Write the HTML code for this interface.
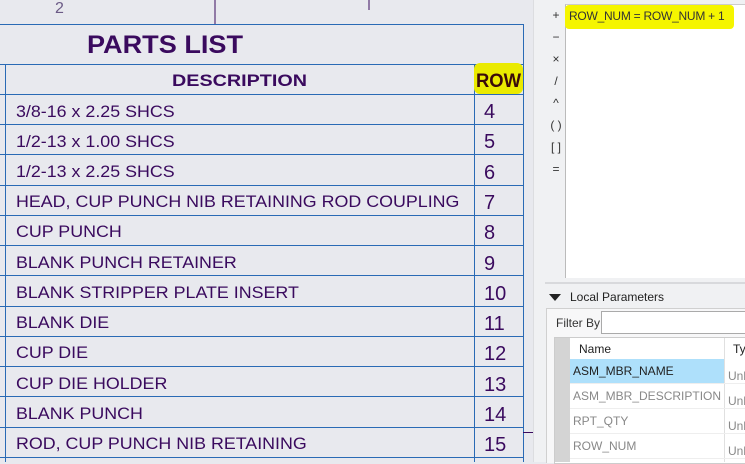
<!DOCTYPE html>
<html><head><style>
body{margin:0;width:745px;height:462px;overflow:hidden;background:#e8e9ee;font-family:"Liberation Sans",sans-serif;position:relative}
.a{position:absolute;white-space:nowrap}
.hl{stroke:#2a6ab5;stroke-width:1}
.t{font-family:"Liberation Sans",sans-serif;fill:#3a0a5e}
</style></head><body>
<svg class="a" style="left:0;top:0" width="533" height="462">
<rect width="533" height="462" fill="#e8e9ee"/>
<text x="55" y="13" font-size="16" class="t" style="fill:#6b5a86">2</text>
<line x1="215" y1="0" x2="215" y2="24" stroke="#3a0a5e"/>
<line x1="369" y1="0" x2="369" y2="10" stroke="#3a0a5e"/>
<line x1="0" y1="24.5" x2="523" y2="24.5" class="hl"/>
<line x1="523.5" y1="24" x2="523.5" y2="462" class="hl"/>
<line x1="5.5" y1="64" x2="5.5" y2="462" class="hl"/>
<line x1="474.5" y1="64" x2="474.5" y2="462" class="hl"/>
<line x1="0" y1="64.5" x2="523" y2="64.5" class="hl"/>
<line x1="0" y1="94.5" x2="523" y2="94.5" class="hl"/>
<g class="hl">
<line x1="0" y1="124.5" x2="523" y2="124.5"/><line x1="0" y1="154.5" x2="523" y2="154.5"/>
<line x1="0" y1="185.5" x2="523" y2="185.5"/><line x1="0" y1="215.5" x2="523" y2="215.5"/>
<line x1="0" y1="245.5" x2="523" y2="245.5"/><line x1="0" y1="275.5" x2="523" y2="275.5"/>
<line x1="0" y1="306.5" x2="523" y2="306.5"/><line x1="0" y1="336.5" x2="523" y2="336.5"/>
<line x1="0" y1="366.5" x2="523" y2="366.5"/><line x1="0" y1="396.5" x2="523" y2="396.5"/>
<line x1="0" y1="427.5" x2="523" y2="427.5"/><line x1="0" y1="457.5" x2="523" y2="457.5"/>
</g>
<line x1="523" y1="432.5" x2="533" y2="432.5" stroke="#3a0a5e"/>
<text x="87" y="53" font-size="25" font-weight="bold" class="t" textLength="156" lengthAdjust="spacingAndGlyphs">PARTS LIST</text>
<text x="172" y="86" font-size="17" font-weight="bold" class="t" textLength="135" lengthAdjust="spacingAndGlyphs">DESCRIPTION</text>
<rect x="474" y="63" width="49" height="31" rx="6" fill="#eaea00"/>
<text x="476" y="87" font-size="19" font-weight="bold" class="t" style="fill:#3a0a0a" textLength="45" lengthAdjust="spacingAndGlyphs">ROW</text>
<g transform="translate(16,0) scale(1.05,1) translate(-16,0)">
<g font-size="17" class="t">
<text x="16" y="117">3/8-16 x 2.25 SHCS</text>
<text x="16" y="147">1/2-13 x 1.00 SHCS</text>
<text x="16" y="177">1/2-13 x 2.25 SHCS</text>
<text x="16" y="207">HEAD, CUP PUNCH NIB RETAINING ROD COUPLING</text>
<text x="16" y="237">CUP PUNCH</text>
<text x="16" y="268">BLANK PUNCH RETAINER</text>
<text x="16" y="298">BLANK STRIPPER PLATE INSERT</text>
<text x="16" y="328">BLANK DIE</text>
<text x="16" y="358">CUP DIE</text>
<text x="16" y="389">CUP DIE HOLDER</text>
<text x="16" y="419">BLANK PUNCH</text>
<text x="16" y="449">ROD, CUP PUNCH NIB RETAINING</text>
</g></g>
<g font-size="20" class="t">
<text x="484" y="118">4</text><text x="484" y="148">5</text><text x="484" y="179">6</text>
<text x="484" y="209">7</text><text x="484" y="239">8</text><text x="484" y="270">9</text>
<text x="484" y="300">10</text><text x="484" y="330">11</text><text x="484" y="360">12</text>
<text x="484" y="391">13</text><text x="484" y="421">14</text><text x="484" y="451">15</text>
</g>
</svg>
<div class="a" style="left:533px;top:0;width:212px;height:462px;background:#f0f1f3"></div>
<div class="a" style="left:533px;top:0;width:1px;height:462px;background:#dcdde0"></div>
<div class="a" style="left:546px;top:0;width:199px;height:282px;background:#f0f1f3;font:12px 'Liberation Sans',sans-serif;color:#333">
<div class="a" style="left:3px;top:4px;line-height:22px;width:14px;text-align:center;white-space:normal">+<br>−<br>×<br>/<br>^<br>( )<br>[ ]<br>=</div>
</div>
<div class="a" style="left:565px;top:4px;width:180px;height:273px;background:#fff;border-left:1px solid #bbb;border-top:1px solid #ccc"></div>
<div class="a" style="left:565px;top:5px;width:169px;height:24px;background:#f5f500;border-radius:4px"></div>
<div class="a" style="left:569px;top:9px;font:12px 'Liberation Sans',sans-serif;color:#333;letter-spacing:-0.25px">ROW_NUM = ROW_NUM + 1</div>
<div class="a" style="left:545px;top:282px;width:200px;height:2px;background:#d8d9dc"></div>
<div class="a" style="left:549px;top:294px;width:0;height:0;border-left:6px solid transparent;border-right:6px solid transparent;border-top:7px solid #222"></div>
<div class="a" style="left:570px;top:290px;font:12px 'Liberation Sans',sans-serif;color:#222">Local Parameters</div>
<div class="a" style="left:546px;top:308px;width:199px;height:154px;background:#f7f7f8;border-left:1px solid #d0d0d0;border-top:1px solid #d0d0d0"></div>
<div class="a" style="left:556px;top:316px;font:12px 'Liberation Sans',sans-serif;color:#333">Filter By</div>
<div class="a" style="left:601px;top:311px;width:144px;height:21px;background:#fff;border:1px solid #aaa"></div>
<div class="a" style="left:554px;top:337px;width:191px;height:125px;background:#fff;border:1px solid #ccc"></div>
<div class="a" style="left:555px;top:338px;width:15px;height:124px;background:#d4d4d4"></div>
<div class="a" style="left:724px;top:338px;width:1px;height:124px;background:#e0e0e0"></div>
<div class="a" style="left:579px;top:342px;font:12px 'Liberation Sans',sans-serif;color:#222">Name</div>
<div class="a" style="left:733px;top:342px;font:12px 'Liberation Sans',sans-serif;color:#222">Ty</div>
<div class="a" style="left:570px;top:359px;width:154px;height:24px;background:#aee0fb"></div>
<div class="a" style="left:573px;top:364px;font:12px 'Liberation Sans',sans-serif;color:#222">ASM_MBR_NAME</div>
<div class="a" style="left:573px;top:389px;font:12px 'Liberation Sans',sans-serif;color:#888">ASM_MBR_DESCRIPTION</div>
<div class="a" style="left:573px;top:414px;font:12px 'Liberation Sans',sans-serif;color:#888">RPT_QTY</div>
<div class="a" style="left:573px;top:439px;font:12px 'Liberation Sans',sans-serif;color:#888">ROW_NUM</div>
<div class="a" style="left:728px;top:364px;font:12px 'Liberation Sans',sans-serif;color:#888;line-height:25px;white-space:normal">Unl<br>Unl<br>Unl<br>Unl</div>
<div class="a" style="left:570px;top:383px;width:175px;height:1px;background:#eee"></div>
<div class="a" style="left:570px;top:408px;width:175px;height:1px;background:#eee"></div>
<div class="a" style="left:570px;top:433px;width:175px;height:1px;background:#eee"></div>
<div class="a" style="left:570px;top:458px;width:175px;height:1px;background:#eee"></div>
</body></html>
